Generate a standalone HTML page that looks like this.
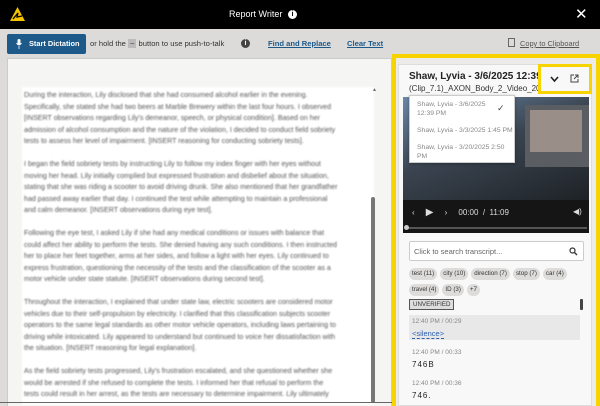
<!DOCTYPE html>
<html><head><meta charset="utf-8"><style>
*{margin:0;padding:0;box-sizing:border-box}
body{width:600px;height:406px;overflow:hidden;background:#dcdbda;font-family:"Liberation Sans",sans-serif;position:relative}
.abs{position:absolute}
.hdr{left:0;top:0;width:600px;height:29px;background:#000;color:#fff}
.tb{left:0;top:29px;width:600px;height:29px;background:#dcdbda;font-size:7.6px;color:#333}
.btn{left:7px;top:5px;width:79px;height:20px;background:#1d5a8a;border-radius:2px;color:#fff;font-weight:bold;font-size:7.4px;line-height:20px;padding-left:22px;white-space:nowrap}
.lk{color:#1d5a8a;text-decoration:underline;font-weight:bold;white-space:nowrap}
.card{left:7px;top:58px;width:385px;height:348px;background:#f5f5f4;border:1px solid #ccc;border-bottom:none}
.txt{left:22px;top:87px;width:352px;height:318px;background:#fff;font-size:7.1px;color:#555;line-height:11.5px;filter:blur(0.7px);white-space:nowrap;overflow:hidden;padding-left:2px}
.txt p{margin-bottom:11.5px}
.sb{left:371px;top:197px;width:4px;height:206px;background:#777;border-radius:2px}
.yel{left:392px;top:54px;width:208px;height:352px;border:4px solid #f7d300;border-bottom:none;background:#ecebea}
.rc{left:398px;top:64px;width:194px;height:342px;background:#f8f8f8;border:1px solid #ddd}
.row{display:flex;gap:3px;white-space:nowrap}
.chip{background:#dddcdb;border-radius:6px;font-size:6.2px;padding:0 3px;height:12px;line-height:12px;color:#333}
.ts{font-size:6.5px;color:#888;white-space:nowrap}
</style></head><body>
<div class="abs hdr">
 <svg class="abs" style="left:9px;top:6px" width="17" height="17" viewBox="0 0 17 17"><polygon points="8.5,1 16,15 1,15" fill="#f5c400"/><path d="M4,13 L9,7 L8,11 L13,10" stroke="#000" stroke-width="1.3" fill="none"/></svg>
 <div class="abs" style="left:229px;top:9px;font-size:9px;white-space:nowrap">Report Writer</div>
 <div class="abs" style="left:288px;top:10px;width:9px;height:9px;border-radius:50%;background:#fff;color:#000;font-size:7px;font-weight:bold;text-align:center;line-height:9px">i</div>
 <div class="abs" style="left:575px;top:5px;font-size:15px">✕</div>
</div>
<div class="abs tb">
 <div class="abs btn"><svg class="abs" style="left:9px;top:5px" width="6" height="10"><rect x="1.5" y="0" width="3" height="6" rx="1.5" fill="#fff"/><path d="M0.5,4 Q3,8 5.5,4 M3,7 V10" stroke="#fff" stroke-width="0.8" fill="none"/></svg>Start Dictation</div>
 <div class="abs" style="left:90px;top:10px;white-space:nowrap">or hold the <span style="background:#bbb;padding:0 2px">~</span> button to use push-to-talk</div>
 <div class="abs" style="left:241px;top:10px;width:9px;height:9px;border-radius:50%;background:#444;color:#fff;font-size:7px;text-align:center;line-height:9px;font-weight:bold">i</div>
 <div class="abs lk" style="left:268px;top:10px">Find and Replace</div>
 <div class="abs lk" style="left:347px;top:10px">Clear Text</div>
 <div class="abs" style="left:508px;top:9px;width:7px;height:9px;border:1px solid #666"></div>
 <div class="abs" style="left:520px;top:10px;color:#555;text-decoration:underline;font-size:7.4px;white-space:nowrap">Copy to Clipboard</div>
</div>
<div class="abs card"></div>
<div class="abs txt"><div style="height:3px"></div>
<p>During the interaction, Lily disclosed that she had consumed alcohol earlier in the evening.<br>Specifically, she stated she had two beers at Marble Brewery within the last four hours. I observed<br>[INSERT observations regarding Lily's demeanor, speech, or physical condition]. Based on her<br>admission of alcohol consumption and the nature of the violation, I decided to conduct field sobriety<br>tests to assess her level of impairment. [INSERT reasoning for conducting sobriety tests].</p>
<p>I began the field sobriety tests by instructing Lily to follow my index finger with her eyes without<br>moving her head. Lily initially complied but expressed frustration and disbelief about the situation,<br>stating that she was riding a scooter to avoid driving drunk. She also mentioned that her grandfather<br>had passed away earlier that day. I continued the test while attempting to maintain a professional<br>and calm demeanor. [INSERT observations during eye test].</p>
<p>Following the eye test, I asked Lily if she had any medical conditions or issues with balance that<br>could affect her ability to perform the tests. She denied having any such conditions. I then instructed<br>her to place her feet together, arms at her sides, and follow a light with her eyes. Lily continued to<br>express frustration, questioning the necessity of the tests and the classification of the scooter as a<br>motor vehicle under state statute. [INSERT observations during second test].</p>
<p>Throughout the interaction, I explained that under state law, electric scooters are considered motor<br>vehicles due to their self-propulsion by electricity. I clarified that this classification subjects scooter<br>operators to the same legal standards as other motor vehicle operators, including laws pertaining to<br>driving while intoxicated. Lily appeared to understand but continued to voice her dissatisfaction with<br>the situation. [INSERT reasoning for legal explanation].</p>
<p>As the field sobriety tests progressed, Lily's frustration escalated, and she questioned whether she<br>would be arrested if she refused to complete the tests. I informed her that refusal to perform the<br>tests could result in her arrest, as the tests are necessary to determine impairment. Lily ultimately</p>
</div>
<div class="abs" style="left:372px;top:87px;font-size:5px;color:#666">▲</div>
<div class="abs sb"></div>
<div class="abs yel"></div>
<div class="abs rc"></div>
<div class="abs" style="left:409px;top:71px;width:130px;overflow:hidden;font-size:10px;font-weight:bold;color:#222;white-space:nowrap">Shaw, Lyvia - 3/6/2025 12:39 .</div>
<div class="abs" style="left:409px;top:84px;width:130px;overflow:hidden;font-size:8px;color:#333;white-space:nowrap">(Clip_7.1)_AXON_Body_2_Video_201</div>
<div class="abs" style="left:538px;top:64px;width:54px;height:30px;border:3px solid #f7d300;background:#f8f8f8"></div>
<svg class="abs" style="left:550px;top:76px" width="9" height="7"><path d="M1,1 L4.5,5 L8,1" stroke="#222" stroke-width="1.6" fill="none"/></svg>
<svg class="abs" style="left:570px;top:74px" width="9" height="9"><path d="M4,1 H1 V8 H8 V5 M5,1 H8 V4 M8,1 L4,5" stroke="#444" stroke-width="1" fill="none"/></svg>
<div class="abs" style="left:403px;top:97px;width:186px;height:136px;background:#111"></div>
<div class="abs" style="left:403px;top:97px;width:186px;height:103px;background:linear-gradient(160deg,#6b88a8,#3a4450 45%,#1e2226)"></div>
<div class="abs" style="left:453px;top:100px;width:32px;height:45px;background:#b9bbb6"></div>
<div class="abs" style="left:525px;top:105px;width:64px;height:62px;background:#5a5e62"></div>
<div class="abs" style="left:530px;top:110px;width:52px;height:42px;background:#9a8f88"></div>
<div class="abs" style="left:403px;top:200px;width:186px;height:33px;background:#151515"></div>
<div class="abs" style="left:412px;top:207px;font-size:8px;color:#ddd;white-space:nowrap">‹ &nbsp;&nbsp;&nbsp;&nbsp;<span style="font-size:10px">▶</span>&nbsp;&nbsp;&nbsp;&nbsp; › &nbsp;&nbsp;&nbsp; 00:00 &nbsp;/ &nbsp;11:09</div>
<div class="abs" style="left:573px;top:207px;font-size:8px;color:#ddd">◀)</div>
<div class="abs" style="left:405px;top:227px;width:182px;height:2px;background:#555"></div>
<div class="abs" style="left:404px;top:225px;width:5px;height:5px;border-radius:50%;background:#ccc"></div>
<div class="abs" style="left:409px;top:95px;width:106px;height:68px;background:#fff;border:1px solid #ccc;box-shadow:0 1px 3px rgba(0,0,0,.3);font-size:6.8px;color:#888;line-height:9px;white-space:nowrap">
 <div class="abs" style="left:7px;top:4px">Shaw, Lyvia - 3/6/2025<br>12:39 PM</div>
 <div class="abs" style="left:87px;top:8px;color:#444;font-size:9px">✓</div>
 <div class="abs" style="left:7px;top:30px">Shaw, Lyvia - 3/3/2025 1:45 PM</div>
 <div class="abs" style="left:7px;top:47px">Shaw, Lyvia - 3/20/2025 2:50<br>PM</div>
</div>
<div class="abs" style="left:409px;top:241px;width:175px;height:20px;background:#fff;border:1px solid #ccc;border-radius:2px;font-size:7.5px;color:#666;padding:5px 4px;white-space:nowrap">Click to search transcript...<svg class="abs" style="right:5px;top:5px" width="9" height="9"><circle cx="3.5" cy="3.5" r="2.5" stroke="#333" stroke-width="1.2" fill="none"/><path d="M5.5,5.5 L8,8" stroke="#333" stroke-width="1.4"/></svg></div>
<div class="abs row" style="left:409px;top:268px"><span class="chip">test (11)</span><span class="chip">city (10)</span><span class="chip">direction (7)</span><span class="chip">stop (7)</span><span class="chip">car (4)</span></div>
<div class="abs row" style="left:409px;top:284px"><span class="chip">travel (4)</span><span class="chip">ID (3)</span><span class="chip">+7</span></div>
<div class="abs" style="left:409px;top:299px;border:1px solid #555;background:#ddd;font-size:6.2px;height:11px;line-height:9px;padding:0 3px;color:#333">UNVERIFIED</div>
<div class="abs" style="left:580px;top:299px;width:3px;height:11px;background:#444;border-radius:1px"></div>
<div class="abs" style="left:409px;top:315px;width:171px;height:25px;background:#e8e8e8"></div>
<div class="abs ts" style="left:412px;top:318px">12:40 PM / 00:29</div>
<div class="abs" style="left:412px;top:329px;font-size:7.5px;color:#2a5db0;border-bottom:1px dashed #2a5db0">&lt;silence&gt;</div>
<div class="abs ts" style="left:412px;top:349px">12:40 PM / 00:33</div>
<div class="abs" style="left:412px;top:360px;font-size:8px;color:#222;letter-spacing:1px">746B</div>
<div class="abs ts" style="left:412px;top:380px">12:40 PM / 00:36</div>
<div class="abs" style="left:412px;top:391px;font-size:8px;color:#222;letter-spacing:1px">746.</div>
<div class="abs" style="left:0;top:402px;width:392px;height:1px;background:#666"></div>
</body></html>
